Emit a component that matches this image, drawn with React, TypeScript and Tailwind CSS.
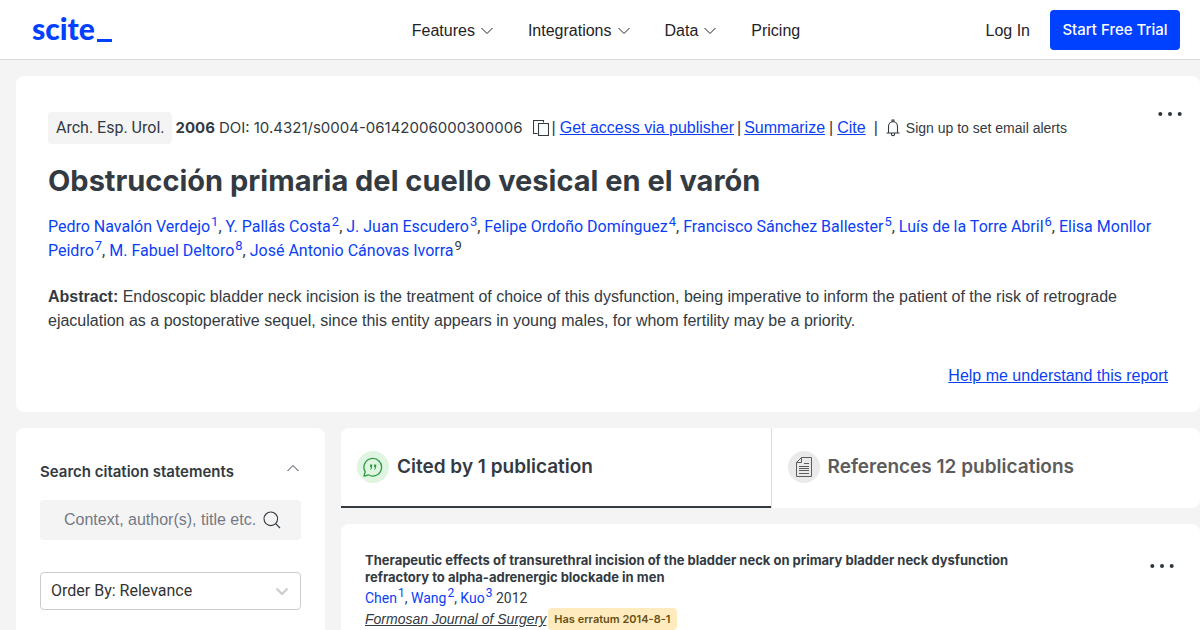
import React from 'react';

const authors = [
  'Pedro Navalón Verdejo',
  'Y. Pallás Costa',
  'J. Juan Escudero',
  'Felipe Ordoño Domínguez',
  'Francisco Sánchez Ballester',
  'Luís de la Torre Abril',
  'Elisa Monllor Peidro',
  'M. Fabuel Deltoro',
  'José Antonio Cánovas Ivorra',
];

const citingAuthors = ['Chen', 'Wang', 'Kuo'];

const navItems = [
  { label: 'Features', menu: true },
  { label: 'Integrations', menu: true },
  { label: 'Data', menu: true },
  { label: 'Pricing', menu: false },
];

function Chevron({ className = '' }: { className?: string }) {
  return (
    <svg viewBox="0 0 12 8" className={`w-3 h-2 ${className}`} fill="none" stroke="currentColor" strokeWidth="1">
      <path d="M0.5 1 L6 6.5 L11.5 1" />
    </svg>
  );
}

function MoreButton() {
  return (
    <button type="button" aria-label="More options" className="flex h-6 w-6 items-center justify-center text-[#2d363d]">
      <svg viewBox="0 0 24 4" className="h-1 w-6" fill="currentColor">
        <circle cx="2.3" cy="2" r="2" />
        <circle cx="12" cy="2" r="2" />
        <circle cx="21.7" cy="2" r="2" />
      </svg>
    </button>
  );
}

function AuthorList({ names, supClass }: { names: string[]; supClass: string }) {
  return (
    <>
      {names.map((name, i) => (
        <React.Fragment key={name}>
          <a href="#" className="text-[#0a3ff5]">{name}</a>
          <sup className={supClass}>{i + 1}</sup>
          {i < names.length - 1 && ', '}
        </React.Fragment>
      ))}
    </>
  );
}

function Header() {
  return (
    <header className="flex h-[60px] items-center justify-between border-b border-[#d8d8d8] bg-white pl-8 pr-5 text-[#1f2326]">
      <a href="#" aria-label="scite_" className="flex w-[340px] items-end gap-0.5 pb-1 text-[#0040ff]">
        <span className="font-['Lato'] text-[30px] leading-8 font-black">scite</span>
        <span className="mb-0.5 h-[3px] w-[15px] bg-[#0040ff]" />
      </a>
      <nav className="flex items-center gap-[35px] pt-0.5">
        {navItems.map((item) => (
          <button key={item.label} type="button" className="flex items-center gap-1.5 leading-6">
            {item.label}
            {item.menu && <Chevron />}
          </button>
        ))}
      </nav>
      <div className="flex w-[340px] items-center justify-end gap-5">
        <a href="#" className="pt-0.5">Log In</a>
        <a href="#" className="w-[130px] rounded bg-[#0040ff] py-2 text-center font-['Inter'] text-[15px] leading-6 font-medium text-white">
          Start Free Trial
        </a>
      </div>
    </header>
  );
}

function PaperCard() {
  return (
    <section className="rounded-lg bg-white pt-6 pr-4 pb-6 pl-8">
      <div className="flex justify-between">
        <div className="flex items-center pt-3">
          <span className="rounded bg-[#f4f4f4] px-2 py-1 font-['Roboto'] leading-6">Arch. Esp. Urol.</span>
          <strong className="ml-[3px] font-['Inter'] text-[15px]">2006</strong>
          <span className="ml-1 font-['Inter'] text-[15px]">DOI: 10.4321/s0004-06142006000300006</span>
          <button type="button" aria-label="Copy DOI" className="ml-2.5">
            <svg viewBox="0 0 16 16" className="h-4 w-4" fill="none" stroke="currentColor" strokeWidth="1.1">
              <path d="M4.5 13.5 H0.5 V0.5 H10.5 V2.5" />
              <path d="M5.5 3.5 H15.5 V15.5 H5.5 Z" />
            </svg>
          </button>
          <span className="ml-[3px]">|</span>
          <a href="#" className="ml-1 text-[#0a3ff5] underline">Get access via publisher</a>
          <span className="mx-[3px]">|</span>
          <a href="#" className="text-[#0a3ff5] underline">Summarize</a>
          <span className="mx-1">|</span>
          <a href="#" className="text-[#0a3ff5] underline">Cite</a>
          <span className="mx-2">|</span>
          <button type="button" className="flex items-center gap-1.5 text-sm">
            <svg viewBox="0 0 14 18" className="w-3.5" fill="none" stroke="currentColor" strokeWidth="1.1">
              <path d="M0.5 14 H13.5 M2.5 14 V7.5 C2.5 4.8 4.4 2.7 7 2.7 C9.6 2.7 11.5 4.8 11.5 7.5 V14 M6 2.8 V1 H8 V2.8 M5.5 14 V15.5 C5.5 17 8.5 17 8.5 15.5 V14" />
            </svg>
            Sign up to set email alerts
          </button>
        </div>
        <div className="pt-0.5 pr-0.5">
          <MoreButton />
        </div>
      </div>
      <div className="pr-4">
        <h1 className="mt-4 font-['Inter'] text-[29px] leading-[42px] font-bold">
          Obstrucción primaria del cuello vesical en el varón
        </h1>
        <p className="mt-[13px] font-['Roboto'] leading-6">
          <AuthorList names={authors} supClass="ml-px text-[13px] text-[#0a3ff5] last:text-[#333a42]" />
        </p>
        <p className="mt-[22px] leading-6">
          <strong>Abstract:</strong> Endoscopic bladder neck incision is the treatment of choice of this dysfunction, being
          imperative to inform the patient of the risk of retrograde ejaculation as a postoperative sequel, since this
          entity appears in young males, for whom fertility may be a priority.
        </p>
        <div className="mt-[31px] text-right leading-6">
          <a href="#" className="text-[#0a3ff5] underline">Help me understand this report</a>
        </div>
      </div>
    </section>
  );
}

function SearchPanel() {
  return (
    <aside className="w-[309px] shrink-0 rounded-lg bg-white px-6 py-8">
      <div className="flex justify-between">
        <label htmlFor="search" className="font-['Inter'] text-[15px] leading-6 font-semibold">
          Search citation statements
        </label>
        <button type="button" aria-label="Collapse search" className="flex h-4 w-4 items-center justify-center">
          <Chevron className="rotate-180" />
        </button>
      </div>
      <div className="mt-4 flex h-10 items-center rounded bg-[#f4f4f4] pr-5 pl-6">
        <input
          id="search"
          type="text"
          placeholder="Context, author(s), title etc."
          className="w-full min-w-0 bg-transparent outline-none placeholder:text-[#747986]"
        />
        <svg viewBox="0 0 18 18" className="h-[18px] w-[18px] shrink-0" fill="none" stroke="currentColor" strokeWidth="1.1">
          <circle cx="7.8" cy="7.8" r="6.8" />
          <path d="M12.7 12.7 L17 17" />
        </svg>
      </div>
      <div className="relative mt-8">
        <select
          aria-label="Order results"
          className="h-[38px] w-full appearance-none rounded border border-[#cccccc] bg-white px-2.5 font-['Roboto'] text-[#333333]"
        >
          <option>Order By: Relevance</option>
          <option>Order By: Recent</option>
        </select>
        <svg
          viewBox="0 0 14 9"
          className="pointer-events-none absolute top-[15px] right-3 w-3.5"
          fill="none"
          stroke="#cccccc"
          strokeWidth="2.2"
        >
          <path d="M1.5 1.5 L7 7 L12.5 1.5" />
        </svg>
      </div>
    </aside>
  );
}

function Tabs() {
  return (
    <div role="tablist" className="grid grid-cols-2 rounded-lg bg-white font-['Inter'] text-[19px] font-semibold">
      <button
        type="button"
        role="tab"
        aria-selected="true"
        className="flex h-20 items-center gap-2 border-b-2 border-[#333a42] px-4"
      >
        <span className="flex h-8 w-8 items-center justify-center rounded-full bg-[#dff4e1] text-[#2d9c42]">
          <svg viewBox="0 0 20 20" className="h-5 w-5" fill="none" stroke="currentColor" strokeWidth="1.3">
            <path d="M1 19 L2.2 14.8 A8.8 8.8 0 1 1 5.2 17.8 Q3.5 19 1 19 Z" strokeLinejoin="round" />
            <path d="M7 7.5 H9.2 V9.5 Q9.2 12 7 13 Q8 11.5 7.8 10 H7 Z M11 7.5 H13.2 V9.5 Q13.2 12 11 13 Q12 11.5 11.8 10 H11 Z" fill="currentColor" stroke="none" />
          </svg>
        </span>
        Cited by 1 publication
      </button>
      <button
        type="button"
        role="tab"
        aria-selected="false"
        className="flex h-20 items-center gap-2 border-l border-[#dedede] px-4 pb-0.5 text-[#5c5c5c]"
      >
        <span className="flex h-8 w-8 items-center justify-center rounded-full bg-[#eaeaea]">
          <svg viewBox="0 0 16 20" className="h-5 w-4" fill="none" stroke="currentColor">
            <path d="M5.5 0.5 H15.5 V19.5 H0.5 V5.5 Z M5.5 0.5 V5.5 H0.5" />
            <path d="M8 6.5 H13 M3 9.5 H13 M3 11.5 H13 M3 13.5 H13 M3 16.5 H13" />
          </svg>
        </span>
        References 12 publications
      </button>
    </div>
  );
}

function CitingPaper() {
  return (
    <article className="flex items-start justify-between gap-8 rounded-lg bg-white py-7 pr-6 pl-6 text-sm">
      <div className="max-w-[660px]">
        <h2 className="font-['Inter'] text-[13px] leading-[17px] font-bold">
          Therapeutic effects of transurethral incision of the bladder neck on primary bladder neck dysfunction
          refractory to alpha-adrenergic blockade in men
        </h2>
        <p className="mt-0.5 font-['Roboto'] leading-5">
          <AuthorList names={citingAuthors} supClass="ml-px text-xs text-[#0a3ff5]" /> 2012
        </p>
        <p className="flex items-center gap-0.5">
          <a href="#" className="italic underline">Formosan Journal of Surgery</a>
          <span className="rounded bg-[#ffebbd] px-1.5 py-0.5 font-['Inter'] text-[11px] leading-[18px] font-semibold text-[#695014]">
            Has erratum 2014-8-1
          </span>
        </p>
      </div>
      <div className="pt-0.5 pr-0.5">
        <MoreButton />
      </div>
    </article>
  );
}

export default function App() {
  return (
    <div className="min-h-screen bg-[#f4f4f4] font-['Liberation_Sans',Arial,sans-serif] text-base text-[#333a42]">
      <Header />
      <main className="flex flex-col gap-4 pt-4 pl-4">
        <PaperCard />
        <div className="flex gap-4">
          <SearchPanel />
          <div className="flex min-w-0 flex-1 flex-col gap-4">
            <Tabs />
            <CitingPaper />
          </div>
        </div>
      </main>
    </div>
  );
}
